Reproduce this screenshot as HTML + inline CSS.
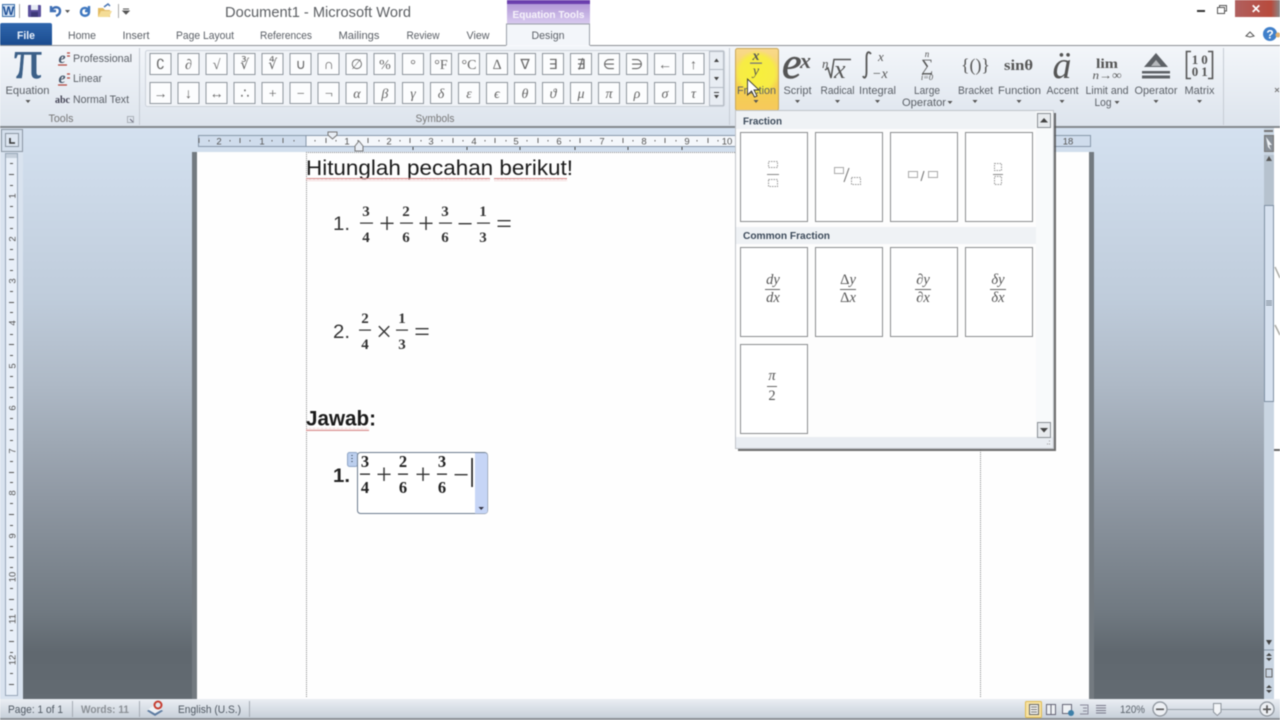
<!DOCTYPE html>
<html><head><meta charset="utf-8"><title>Document1 - Microsoft Word</title>
<style>
html,body{margin:0;padding:0;width:1280px;height:720px;overflow:hidden;background:#fff}
svg{display:block;filter:blur(.45px)}
text{font-family:"Liberation Sans",sans-serif}
.r{font-size:11px;fill:#5a5f66}
.c{text-anchor:middle}
.s{font-family:"Liberation Serif",serif}
.sym{font-family:"Liberation Serif","DejaVu Sans",serif;font-size:14px;fill:#666;text-anchor:middle}
.ic{font-family:"Liberation Serif",serif;fill:#555}
.m{font-family:"Liberation Serif",serif;font-weight:bold;font-size:15px;fill:#333;text-anchor:middle}
.mb{font-family:"Liberation Serif",serif;font-weight:bold;font-size:16.5px;fill:#222;text-anchor:middle}
text.op{font-family:"Liberation Serif",serif;font-size:28px;fill:#333;text-anchor:middle}
.rn{font-size:9.5px;fill:#555;text-anchor:middle}
.g{font-family:"Liberation Serif",serif;font-style:italic;font-size:14.5px;fill:#555;text-anchor:middle}
.u{font-style:normal}
.ph{fill:none;stroke:#999;stroke-width:1;stroke-dasharray:1.5 1}
</style></head><body>
<svg width="1280" height="720" viewBox="0 0 1280 720" xmlns="http://www.w3.org/2000/svg">
<defs>
<linearGradient id="bg" x1="0" y1="128" x2="0" y2="698" gradientUnits="userSpaceOnUse">
<stop offset="0" stop-color="#d4e1f0"/><stop offset=".3" stop-color="#bfccdb"/><stop offset=".45" stop-color="#aeb9c6"/><stop offset=".65" stop-color="#8f98a3"/><stop offset=".85" stop-color="#707981"/><stop offset=".92" stop-color="#60686f"/><stop offset="1" stop-color="#636b72"/></linearGradient>
<linearGradient id="rib" x1="0" y1="0" x2="0" y2="1"><stop offset="0" stop-color="#f3f6fa"/><stop offset="1" stop-color="#dde4ed"/></linearGradient>
<linearGradient id="file" x1="0" y1="0" x2="0" y2="1"><stop offset="0" stop-color="#2f66ad"/><stop offset="1" stop-color="#1a4b8e"/></linearGradient>
<linearGradient id="eq" x1="0" y1="0" x2="0" y2="1"><stop offset="0" stop-color="#b39ad8"/><stop offset="1" stop-color="#d9cbef"/></linearGradient>
<linearGradient id="yel" x1="0" y1="0" x2="0" y2="1"><stop offset="0" stop-color="#f9d98c"/><stop offset=".6" stop-color="#f5d04f"/><stop offset="1" stop-color="#f6c95c"/></linearGradient>
<radialGradient id="spot"><stop offset="0" stop-color="#f7f03c"/><stop offset=".75" stop-color="#f7ec45"/><stop offset="1" stop-color="#f7ec45" stop-opacity="0"/></radialGradient>
<linearGradient id="st" x1="0" y1="0" x2="0" y2="1"><stop offset="0" stop-color="#eaeef3"/><stop offset="1" stop-color="#c8d0da"/></linearGradient>
<linearGradient id="cl" x1="0" y1="0" x2="1" y2="0"><stop offset="0" stop-color="#b0605f"/><stop offset=".8" stop-color="#b84a3c"/><stop offset="1" stop-color="#888"/></linearGradient>
<pattern id="wave" width="4" height="3" patternUnits="userSpaceOnUse"><path d="M0 2L1 1L2 2L3 1L4 2" stroke="#d88a8a" fill="none" stroke-width="1"/></pattern>
<g id="row" fill="#fcfdfe" stroke="#8f969e" stroke-width="1">
<rect x="150" y="0" width="21" height="21"/><rect x="178" y="0" width="21" height="21"/><rect x="206" y="0" width="21" height="21"/><rect x="234" y="0" width="21" height="21"/><rect x="262" y="0" width="21" height="21"/><rect x="290" y="0" width="21" height="21"/><rect x="318" y="0" width="21" height="21"/><rect x="346" y="0" width="21" height="21"/><rect x="374" y="0" width="21" height="21"/><rect x="402.500" y="0" width="21" height="21"/><rect x="430.500" y="0" width="21" height="21"/><rect x="458.500" y="0" width="21" height="21"/><rect x="486.500" y="0" width="21" height="21"/><rect x="514.500" y="0" width="21" height="21"/><rect x="542.500" y="0" width="21" height="21"/><rect x="570.500" y="0" width="21" height="21"/><rect x="598.500" y="0" width="21" height="21"/><rect x="626.500" y="0" width="21" height="21"/><rect x="654.500" y="0" width="21" height="21"/><rect x="683" y="0" width="21" height="21"/>
</g>
<path id="ar" d="M-2.500 0H2.500L0 3Z" fill="#555"/>
</defs>

<!-- workspace -->
<rect x="0" y="127" width="1280" height="572" fill="url(#bg)"/>
<rect x="0" y="127" width="23" height="572" fill="#d9e3ef"/>
<rect x="1264" y="127" width="10" height="572" fill="#c9d5e2"/>
<rect x="1274" y="127" width="6" height="572" fill="#fff"/>
<path d="M1275 267L1280 278M1275 325L1280 335" stroke="#a9a9a4" stroke-width="1.500"/>
<rect x="1274" y="449" width="6" height="2" fill="#666"/>

<!-- page -->
<rect x="192" y="152" width="5" height="547" fill="#737a80"/>
<rect x="1089" y="152" width="5" height="547" fill="#737a80"/>
<rect x="197" y="152" width="892" height="547" fill="#fefefe"/>
<path d="M306.500 152V698M980.500 152V698M306 152.500H980" stroke="#868889" stroke-width="1" stroke-dasharray="1 1" fill="none"/>

<!-- tab selector + vertical ruler -->
<rect x="1.500" y="129.500" width="21" height="22" fill="#d4dfec" stroke="#8b96a3"/>
<rect x="5.500" y="133.500" width="13" height="13" fill="#dde6f1" stroke="#8b96a3"/>
<path d="M10 138V143H15" stroke="#333" stroke-width="1.600" fill="none"/>
<rect x="5.500" y="153.500" width="12" height="542" fill="#e8eff8" stroke="#98a7b8"/>
<rect x="6" y="154" width="11" height="4" fill="#c5cfdb"/>
<g fill="#555">
<rect x="10" y="163" width="3" height="1"/><rect x="9" y="174" width="5" height="1"/><rect x="10" y="185" width="3" height="1"/><rect x="10" y="206" width="3" height="1"/><rect x="9" y="217" width="5" height="1"/><rect x="10" y="228" width="3" height="1"/><rect x="10" y="249" width="3" height="1"/><rect x="9" y="259" width="5" height="1"/><rect x="10" y="270" width="3" height="1"/><rect x="10" y="291" width="3" height="1"/><rect x="9" y="302" width="5" height="1"/><rect x="10" y="312" width="3" height="1"/><rect x="10" y="334" width="3" height="1"/><rect x="9" y="344" width="5" height="1"/><rect x="10" y="355" width="3" height="1"/><rect x="10" y="376" width="3" height="1"/><rect x="9" y="387" width="5" height="1"/><rect x="10" y="397" width="3" height="1"/><rect x="10" y="418" width="3" height="1"/><rect x="9" y="429" width="5" height="1"/><rect x="10" y="440" width="3" height="1"/><rect x="10" y="461" width="3" height="1"/><rect x="9" y="472" width="5" height="1"/><rect x="10" y="482" width="3" height="1"/><rect x="10" y="503" width="3" height="1"/><rect x="9" y="514" width="5" height="1"/><rect x="10" y="525" width="3" height="1"/><rect x="10" y="546" width="3" height="1"/><rect x="9" y="557" width="5" height="1"/><rect x="10" y="567" width="3" height="1"/><rect x="10" y="588" width="3" height="1"/><rect x="9" y="599" width="5" height="1"/><rect x="10" y="609" width="3" height="1"/><rect x="10" y="630" width="3" height="1"/><rect x="9" y="641" width="5" height="1"/><rect x="10" y="652" width="3" height="1"/><rect x="10" y="673" width="3" height="1"/><rect x="9" y="684" width="5" height="1"/>
</g>
<g>
<text class="rn" transform="translate(15.500,196) rotate(-90)">1</text><text class="rn" transform="translate(15.500,239) rotate(-90)">2</text><text class="rn" transform="translate(15.500,281) rotate(-90)">3</text><text class="rn" transform="translate(15.500,323) rotate(-90)">4</text><text class="rn" transform="translate(15.500,366) rotate(-90)">5</text><text class="rn" transform="translate(15.500,408) rotate(-90)">6</text><text class="rn" transform="translate(15.500,451) rotate(-90)">7</text><text class="rn" transform="translate(15.500,493) rotate(-90)">8</text><text class="rn" transform="translate(15.500,536) rotate(-90)">9</text><text class="rn" transform="translate(15.500,577) rotate(-90)">10</text><text class="rn" transform="translate(15.500,619) rotate(-90)">11</text><text class="rn" transform="translate(15.500,660) rotate(-90)">12</text>
</g>

<!-- horizontal ruler -->
<rect x="198.500" y="135.500" width="892" height="11" fill="#cfdcec" stroke="#8898ab"/>
<rect x="306" y="136" width="674" height="10" fill="#f4f7fb"/>
<path d="M306 135V147" stroke="#8898ab"/>
<g><text class="rn" x="219" y="144.500">2</text><text class="rn" x="262" y="144.500">1</text><text class="rn" x="347" y="144.500">1</text><text class="rn" x="389" y="144.500">2</text><text class="rn" x="431" y="144.500">3</text><text class="rn" x="474" y="144.500">4</text><text class="rn" x="516" y="144.500">5</text><text class="rn" x="559" y="144.500">6</text><text class="rn" x="602" y="144.500">7</text><text class="rn" x="644" y="144.500">8</text><text class="rn" x="687" y="144.500">9</text><text class="rn" x="727" y="144.500">10</text><text class="rn" x="1068" y="144.500">18</text></g>
<path d="M199 138v5M209 140v1.500M230 140v1.500M240 138v5M250 140v1.500M272 140v1.500M283 138v5M294 140v1.500M315 140v1.500M326 138v5M336 140v1.500M358 140v1.500M368 138v5M379 140v1.500M400 140v1.500M410 138v5M421 140v1.500M442 140v1.500M453 138v5M463 140v1.500M485 140v1.500M495 138v5M506 140v1.500M527 140v1.500M538 138v5M548 140v1.500M570 140v1.500M580 138v5M591 140v1.500M612 140v1.500M623 138v5M633 140v1.500M655 140v1.500M665 138v5M676 140v1.500M697 140v1.500M708 138v5M718 140v1.500" stroke="#666" fill="none"/>
<path d="M413 147v3M467 147v3M520 147v3M575 147v3M628 147v3M682 147v3" stroke="#444" fill="none"/>
<path d="M328 132H337V135L332.500 139L328 135Z" fill="#e9eef5" stroke="#777"/>
<path d="M355 146L359 141L363 146V151H355Z" fill="#e9eef5" stroke="#777"/>

<!-- right scrollbar -->
<rect x="1264" y="130" width="9" height="2" fill="#777"/>
<rect x="1264.500" y="135.500" width="9" height="16" fill="#888f97" stroke="#777"/>
<path d="M1266 137L1272 145L1269 145L1271 150L1268 147Z" fill="#eef2f6"/>
<rect x="1264" y="155" width="10" height="50" fill="#aeb9c6" opacity=".7"/>
<path d="M1266 161H1272L1269 156Z" fill="#555"/>
<rect x="1264.500" y="205.500" width="9" height="196" fill="#d7e2f0" stroke="#7f90a3"/>
<path d="M1266 301H1272M1266 303H1272M1266 305H1272" stroke="#7a8795" fill="none"/>
<path d="M1266 640H1272L1269 645Z" fill="#444"/>
<path d="M1264 650H1274" stroke="#8795a4"/>
<path d="M1266 656H1272L1269 653ZM1266 658H1272L1269 661Z" fill="#444"/>
<rect x="1266" y="669" width="6" height="8" fill="none" stroke="#666"/>
<path d="M1266 688H1272L1269 685ZM1266 690H1272L1269 693Z" fill="#444"/>

<!-- document -->
<text x="306" y="175" font-size="21" textLength="267" lengthAdjust="spacingAndGlyphs" fill="#1a1a1a">Hitunglah pecahan berikut!</text>
<rect x="306" y="178" width="184" height="3" fill="url(#wave)"/>
<rect x="494" y="178" width="73" height="3" fill="url(#wave)"/>

<text x="333" y="230" font-size="19" textLength="17" lengthAdjust="spacingAndGlyphs" fill="#333">1.</text>
<text class="m" x="366" y="216">3</text><rect x="360" y="222.500" width="13" height="1.200" fill="#333"/><text class="m" x="366" y="242">4</text>
<text class="op" x="387" y="233">+</text>
<text class="m" x="406" y="216">2</text><rect x="400" y="222.500" width="13" height="1.200" fill="#333"/><text class="m" x="406" y="242">6</text>
<text class="op" x="426" y="233">+</text>
<text class="m" x="445" y="216">3</text><rect x="439" y="222.500" width="13" height="1.200" fill="#333"/><text class="m" x="445" y="242">6</text>
<text class="op" x="465" y="233">−</text>
<text class="m" x="483" y="216">1</text><rect x="477" y="222.500" width="13" height="1.200" fill="#333"/><text class="m" x="483" y="242">3</text>
<text class="op" x="504" y="233">=</text>

<text x="333" y="338" font-size="19" textLength="17" lengthAdjust="spacingAndGlyphs" fill="#333">2.</text>
<text class="m" x="365" y="323">2</text><rect x="359" y="329.500" width="12" height="1.200" fill="#333"/><text class="m" x="365" y="349">4</text>
<text class="op" x="384" y="341">×</text>
<text class="m" x="402" y="323">1</text><rect x="396" y="329.500" width="12" height="1.200" fill="#333"/><text class="m" x="402" y="349">3</text>
<text class="op" x="422" y="341">=</text>

<text x="306" y="425.500" font-size="21" font-weight="bold" textLength="70" lengthAdjust="spacingAndGlyphs" fill="#1a1a1a">Jawab:</text>
<rect x="306" y="428" width="63" height="3" fill="url(#wave)"/>

<rect x="347.500" y="452.500" width="10" height="14" rx="2" fill="#bccfee" stroke="#8ea5c6"/>
<path d="M352 455v1M352 458v1M352 461v1" stroke="#345" stroke-width="1.200"/>
<rect x="357.500" y="452.500" width="130" height="61" rx="3" fill="#fff" stroke="#6c7c8e"/>
<path d="M475 453H485a2.500 2.500 0 0 1 2.500 2.500V511a2.500 2.500 0 0 1-2.500 2.500H475Z" fill="#c6d5f6"/>
<path d="M478.500 507H484L481.200 510Z" fill="#334"/>
<text x="333" y="482" font-size="19" font-weight="bold" textLength="17" lengthAdjust="spacingAndGlyphs" fill="#222">1.</text>
<text class="mb" x="365" y="467">3</text><rect x="360" y="473.500" width="10" height="1.300" fill="#222"/><text class="mb" x="365" y="493">4</text>
<text class="op" x="384" y="484">+</text>
<text class="mb" x="403" y="467">2</text><rect x="398" y="473.500" width="10" height="1.300" fill="#222"/><text class="mb" x="403" y="493">6</text>
<text class="op" x="423" y="484">+</text>
<text class="mb" x="442" y="467">3</text><rect x="437" y="473.500" width="10" height="1.300" fill="#222"/><text class="mb" x="442" y="493">6</text>
<text class="op" x="461" y="484">−</text>
<rect x="471.300" y="458" width="1.500" height="29" fill="#111"/>

<!-- title bar + tabs -->
<rect x="0" y="0" width="1280" height="45" fill="#fff"/>
<rect x="2.500" y="4.500" width="12" height="12" fill="#d5e3f3" stroke="#3a6ea8"/>
<text x="8.500" y="15" font-size="12" font-weight="bold" fill="#1e4f96" class="c">W</text>
<path d="M19.500 4V18M118.500 4V18" stroke="#aaa"/>
<rect x="28" y="5" width="13" height="12" rx="1" fill="#5a4f9b"/><rect x="31" y="5" width="7" height="5" fill="#e8ecf5"/><rect x="31" y="12" width="7" height="5" fill="#3d3878"/>
<path d="M51 6V11H56M51 11C53 6 60 6 60 11C60 14 58 15 56 16" stroke="#3f6fb5" stroke-width="2.400" fill="none"/>
<path d="M65 10H70L67.500 13Z" fill="#555"/>
<path d="M89 6V11H85M88 10C87 7 81 7 81 12C81 17 89 17 89 12" stroke="#3f78c0" stroke-width="2.400" fill="none"/>
<path d="M98 8H103L105 10H110V17H98Z" fill="#e3bb63"/><path d="M98 17L101 11H112L109 17Z" fill="#f4dc96"/><path d="M104 7L108 4L110 6" stroke="#4a76b5" stroke-width="1.500" fill="none"/>
<path d="M123 9H129M123 11H129L126 14H126Z" stroke="#555" fill="#555"/>
<text x="225" y="17" font-size="15" textLength="186" lengthAdjust="spacingAndGlyphs" fill="#5c5f63">Document1  -  Microsoft Word</text>
<rect x="1197" y="10" width="8" height="2" fill="#333"/>
<rect x="1217.500" y="7.500" width="7" height="6" fill="#fff" stroke="#555"/><path d="M1219.500 7V5.500H1226.500V11H1225" stroke="#555" fill="none"/>
<rect x="1235" y="0" width="45" height="17" fill="url(#cl)"/>
<text x="1256" y="13" font-size="12" font-weight="bold" fill="#fff" class="c">✕</text>

<rect x="0" y="23" width="52" height="23" rx="2" fill="url(#file)"/>
<text x="26" y="39" font-size="11" font-weight="bold" fill="#e9f0fa" class="c" textLength="18" lengthAdjust="spacingAndGlyphs">File</text>
<text class="r c" x="82" y="39" textLength="28" lengthAdjust="spacingAndGlyphs">Home</text>
<text class="r c" x="136" y="39" textLength="27" lengthAdjust="spacingAndGlyphs">Insert</text>
<text class="r c" x="205" y="39" textLength="58" lengthAdjust="spacingAndGlyphs">Page Layout</text>
<text class="r c" x="286" y="39" textLength="52" lengthAdjust="spacingAndGlyphs">References</text>
<text class="r c" x="359" y="39" textLength="41" lengthAdjust="spacingAndGlyphs">Mailings</text>
<text class="r c" x="423" y="39" textLength="33" lengthAdjust="spacingAndGlyphs">Review</text>
<text class="r c" x="478" y="39" textLength="23" lengthAdjust="spacingAndGlyphs">View</text>
<rect x="507" y="0" width="83" height="4" fill="#6b3fae"/>
<rect x="507" y="4" width="83" height="20" fill="url(#eq)"/>
<text x="548.500" y="18" font-size="10.500" font-weight="bold" fill="#f6f2fb" class="c" textLength="72" lengthAdjust="spacingAndGlyphs">Equation Tools</text>
<path d="M506.500 45.500V24H589.500V45.500" fill="#f3f6fa" stroke="#9aa0a8"/>
<text class="r c" x="548" y="39" textLength="33" lengthAdjust="spacingAndGlyphs">Design</text>
<path d="M0 45.500H506M590 45.500H1280" stroke="#8c9095"/>
<path d="M1246 36L1250 32L1254 36L1250 37Z" fill="none" stroke="#555"/>
<circle cx="1270" cy="34" r="7" fill="#3f7fca"/><text x="1270" y="38.500" font-size="12" font-weight="bold" fill="#fff" class="c">?</text>
<circle cx="1278" cy="35" r="2.500" fill="#e0b070"/>

<!-- ribbon -->
<rect x="0" y="46" width="1280" height="80" fill="url(#rib)"/>
<rect x="0" y="126" width="1280" height="2" fill="#84898e"/>
<path d="M139.500 48V125M729.500 48V125M1223.500 48V125" stroke="#c6ccd4"/>

<text x="28" y="78" font-size="56" class="c s" fill="#3c6088" stroke="#3c6088" stroke-width=".5">π</text>
<text class="r c" x="27.500" y="94" textLength="44" lengthAdjust="spacingAndGlyphs">Equation</text>
<use href="#ar" x="28" y="100"/>
<text x="62" y="63" font-size="16" font-style="italic" font-weight="bold" class="s c" fill="#45576b">e</text><path d="M67 53h3M67 56h3M58 65h9" stroke="#b5473e" stroke-width="1.300" fill="none"/>
<text x="62" y="83" font-size="16" font-style="italic" font-weight="bold" class="s c" fill="#45576b">e</text><path d="M67 74h3M67 78h3M58 85h9" stroke="#b5473e" stroke-width="1.300" fill="none"/>
<text x="55" y="103" font-size="10" font-weight="bold" class="s" fill="#445" textLength="15" lengthAdjust="spacingAndGlyphs">abc</text>
<text class="r" x="73" y="62" textLength="59" lengthAdjust="spacingAndGlyphs">Professional</text>
<text class="r" x="73" y="82" textLength="29" lengthAdjust="spacingAndGlyphs">Linear</text>
<text class="r" x="73" y="103" textLength="56" lengthAdjust="spacingAndGlyphs">Normal Text</text>
<text class="r c" x="61" y="122" textLength="25" lengthAdjust="spacingAndGlyphs" style="fill:#777">Tools</text>
<path d="M127.500 116.500H133.500V122.500H127.500Z" fill="none" stroke="#aab0b8"/><path d="M130 119L133 122" stroke="#667"/>

<!-- symbols -->
<rect x="145.500" y="50.500" width="579" height="56" rx="2" fill="#f0f3f7" stroke="#ccd2da"/>
<use href="#row" y="53.500"/><use href="#row" y="82.500"/>
<text class="sym" x="160.500" y="69">∁</text><text class="sym" x="188.500" y="69">∂</text><text class="sym" x="216.600" y="69">√</text><text class="sym" x="244.700" y="69">∛</text><text class="sym" x="272.700" y="69">∜</text><text class="sym" x="300.800" y="69">∪</text><text class="sym" x="328.800" y="69">∩</text><text class="sym" x="356.900" y="69">∅</text><text class="sym" x="384.900" y="69">%</text><text class="sym" x="413" y="69">°</text><text class="sym" x="441" y="69">°F</text><text class="sym" x="469" y="69">°C</text><text class="sym" x="497" y="69">∆</text><text class="sym" x="525" y="69">∇</text><text class="sym" x="553" y="69">∃</text><text class="sym" x="581" y="69">∄</text><text class="sym" x="609" y="69">∈</text><text class="sym" x="637" y="69">∋</text><text class="sym" x="665" y="69">←</text><text class="sym" x="693.500" y="69">↑</text>
<text class="sym" x="160.500" y="98">→</text><text class="sym" x="188.500" y="98">↓</text><text class="sym" x="216.600" y="98">↔</text><text class="sym" x="244.700" y="98">∴</text><text class="sym" x="272.700" y="98">+</text><text class="sym" x="300.800" y="98">−</text><text class="sym" x="328.800" y="98">¬</text><text class="sym" x="356.900" y="98" font-style="italic">α</text><text class="sym" x="384.900" y="98" font-style="italic">β</text><text class="sym" x="413" y="98" font-style="italic">γ</text><text class="sym" x="441" y="98" font-style="italic">δ</text><text class="sym" x="469" y="98" font-style="italic">ε</text><text class="sym" x="497" y="98" font-style="italic">ϵ</text><text class="sym" x="525" y="98" font-style="italic">θ</text><text class="sym" x="553" y="98" font-style="italic">ϑ</text><text class="sym" x="581" y="98" font-style="italic">μ</text><text class="sym" x="609" y="98" font-style="italic">π</text><text class="sym" x="637" y="98" font-style="italic">ρ</text><text class="sym" x="665" y="98" font-style="italic">σ</text><text class="sym" x="693.500" y="98" font-style="italic">τ</text>
<rect x="709.500" y="51.500" width="14" height="18" fill="#e8edf3" stroke="#b3bac3"/><rect x="709.500" y="69.500" width="14" height="18" fill="#e8edf3" stroke="#b3bac3"/><rect x="709.500" y="87.500" width="14" height="18" fill="#e8edf3" stroke="#b3bac3"/>
<path d="M714 62H719L716.500 58.500ZM714 77H719L716.500 80.500ZM714 95H719L716.500 98.500Z" fill="#444"/><path d="M714 92.500H719" stroke="#444"/>
<text class="r c" x="435" y="122" textLength="39" lengthAdjust="spacingAndGlyphs" style="fill:#777">Symbols</text>

<!-- fraction button -->
<rect x="735.500" y="48.500" width="43" height="62" rx="2" fill="url(#yel)" stroke="#c9a75a"/>
<clipPath id="fb"><rect x="736" y="49" width="42" height="61"/></clipPath>
<circle cx="757" cy="73" r="23" fill="url(#spot)" clip-path="url(#fb)"/>
<text x="756" y="60" font-size="14" font-style="italic" font-weight="bold" class="s c" fill="#555">x</text>
<rect x="750" y="62.500" width="12" height="1.300" fill="#777"/>
<text x="756" y="75" font-size="14" font-style="italic" class="s c" fill="#555">y</text>
<text class="r c" x="756.500" y="94" textLength="39" lengthAdjust="spacingAndGlyphs">Fraction</text>
<use href="#ar" x="756" y="100"/>
<path d="M747.500 79V95L751.500 91L754.500 97L757 96L754 90H759Z" fill="#fff" stroke="#333" stroke-width=".9"/>

<!-- other equation buttons -->
<text x="782" y="78" font-size="44" font-style="italic" class="ic" stroke="#555" stroke-width=".6">e</text>
<text x="800" y="68" font-size="22" font-style="italic" font-weight="bold" class="ic">x</text>
<text class="r c" x="797.500" y="94" textLength="28" lengthAdjust="spacingAndGlyphs">Script</text><use href="#ar" x="797.500" y="100"/>

<text x="822" y="68" font-size="13" font-style="italic" class="ic">n</text>
<path d="M825 70L828 68L831 78L834 59.500H851" stroke="#555" stroke-width="1.500" fill="none"/>
<text x="834" y="78" font-size="26" font-style="italic" class="ic">x</text>
<text class="r c" x="837.500" y="94" textLength="34" lengthAdjust="spacingAndGlyphs">Radical</text><use href="#ar" x="837.500" y="100"/>

<path d="M871 54C868 50 866.500 53 866.500 58V72C866.500 78 864 79 863 76" stroke="#555" stroke-width="1.800" fill="none"/>
<text x="878" y="61" font-size="13" font-style="italic" class="ic">x</text>
<text x="872" y="78" font-size="14" font-style="italic" class="ic">−x</text>
<text class="r c" x="877.500" y="94" textLength="37" lengthAdjust="spacingAndGlyphs">Integral</text><use href="#ar" x="877.500" y="100"/>

<text x="927" y="57" font-size="9" font-style="italic" class="ic c">n</text>
<text x="927" y="71" font-size="17" class="ic c">∑</text>
<text x="927" y="80" font-size="8.500" font-style="italic" class="ic c">i=0</text>
<text class="r c" x="927" y="94" textLength="26" lengthAdjust="spacingAndGlyphs">Large</text>
<text class="r c" x="924" y="106" textLength="44" lengthAdjust="spacingAndGlyphs">Operator</text><use href="#ar" x="950" y="101"/>

<text x="975.500" y="71" font-size="18" class="ic c" textLength="29" lengthAdjust="spacingAndGlyphs">{()}</text>
<text class="r c" x="975.500" y="94" textLength="35" lengthAdjust="spacingAndGlyphs">Bracket</text><use href="#ar" x="975" y="100"/>

<text x="1018.500" y="70" font-size="15" font-weight="bold" class="ic c" textLength="29" lengthAdjust="spacingAndGlyphs">sinθ</text>
<text class="r c" x="1019.500" y="94" textLength="43" lengthAdjust="spacingAndGlyphs">Function</text><use href="#ar" x="1019" y="100"/>

<text x="1062" y="78" font-size="38" font-style="italic" class="ic c">ä</text>
<text class="r c" x="1062.500" y="94" textLength="32" lengthAdjust="spacingAndGlyphs">Accent</text><use href="#ar" x="1062" y="100"/>

<text x="1107" y="68" font-size="14" font-weight="bold" class="ic c" textLength="22" lengthAdjust="spacingAndGlyphs">lim</text>
<text x="1107" y="79" font-size="12" font-style="italic" class="ic c" textLength="29" lengthAdjust="spacingAndGlyphs">n→∞</text>
<text class="r c" x="1107" y="94" textLength="43" lengthAdjust="spacingAndGlyphs">Limit and</text>
<text class="r c" x="1103" y="106" textLength="17" lengthAdjust="spacingAndGlyphs">Log</text><use href="#ar" x="1117" y="101"/>

<path d="M1156 53L1168 67H1144Z" fill="#5d6166"/><path d="M1156 60L1161 66H1151Z" fill="#b5b8bc"/>
<rect x="1142" y="71" width="28" height="2.500" fill="#5d6166"/><rect x="1142" y="75.500" width="28" height="3" fill="#5d6166"/>
<text class="r c" x="1156" y="94" textLength="43" lengthAdjust="spacingAndGlyphs">Operator</text><use href="#ar" x="1156" y="100"/>

<path d="M1191 51.500H1186.500V78.500H1191M1208 51.500H1212.500V78.500H1208" stroke="#555" stroke-width="1.600" fill="none"/>
<text x="1195" y="64" font-size="13" font-weight="bold" class="ic c">1</text><text x="1204.500" y="64" font-size="13" font-weight="bold" class="ic c">0</text>
<text x="1195" y="76" font-size="13" font-weight="bold" class="ic c">0</text><text x="1204.500" y="76" font-size="13" font-weight="bold" class="ic c">1</text>
<text class="r c" x="1199.500" y="94" textLength="30" lengthAdjust="spacingAndGlyphs">Matrix</text><use href="#ar" x="1199.500" y="100"/>
<path d="M1275 88L1279 92M1279 88L1275 92" stroke="#777"/>

<!-- popup -->
<rect x="738" y="113" width="318" height="338" fill="#555" opacity=".85"/>
<rect x="735.500" y="110.500" width="318" height="338" fill="#fdfdfd" stroke="#c0c4c9"/>
<rect x="736" y="111" width="300" height="18" fill="#eff2f5"/>
<rect x="736" y="227" width="300" height="17" fill="#eff2f5"/>
<rect x="1036" y="111" width="17" height="326" fill="#f8fafb"/>
<rect x="736" y="437" width="317" height="11" fill="#e9edf2"/>
<text x="743" y="124.500" font-size="10" font-weight="bold" fill="#3c4a5a" textLength="39" lengthAdjust="spacingAndGlyphs">Fraction</text>
<text x="743" y="239" font-size="10" font-weight="bold" fill="#3c4a5a" textLength="87" lengthAdjust="spacingAndGlyphs">Common Fraction</text>
<rect x="1037.500" y="113.500" width="13" height="14" fill="#e8ebee" stroke="#8a8f95"/><path d="M1040 122.500H1048L1044 118Z" fill="#444"/>
<rect x="1037.500" y="422.500" width="13" height="15" fill="#e8ebee" stroke="#8a8f95"/><path d="M1040 428H1048L1044 432.500Z" fill="#444"/>
<path d="M1049 441h1M1047 444h1M1049 444h1" stroke="#999"/>
<g fill="#fff" stroke="#8b8d8f">
<rect x="740.500" y="132.500" width="67" height="89"/><rect x="815.500" y="132.500" width="67" height="89"/><rect x="890.500" y="132.500" width="67" height="89"/><rect x="965.500" y="132.500" width="67" height="89"/>
<rect x="740.500" y="247.500" width="67" height="89"/><rect x="815.500" y="247.500" width="67" height="89"/><rect x="890.500" y="247.500" width="67" height="89"/><rect x="965.500" y="247.500" width="67" height="89"/>
<rect x="740.500" y="344.500" width="67" height="89"/>
</g>
<rect class="ph" x="768.500" y="161.500" width="9" height="6"/><path d="M767 174.500H779" stroke="#888"/><rect class="ph" x="768.500" y="179.500" width="9" height="7"/>
<rect x="834.500" y="167.500" width="9" height="6" fill="none" stroke="#aaa"/><path d="M844 182L849 168" stroke="#777" stroke-width="1.100"/><rect class="ph" x="851.500" y="177.500" width="9" height="7"/>
<rect x="908.500" y="171.500" width="9" height="6" fill="none" stroke="#aaa"/><path d="M921 181L924 171" stroke="#777" stroke-width="1.100"/><rect x="928.500" y="171.500" width="9" height="6" fill="none" stroke="#aaa"/>
<rect class="ph" x="994.500" y="163.500" width="7" height="7"/><path d="M993 174.500H1003" stroke="#888"/><rect class="ph" x="994.500" y="176.500" width="7" height="8"/>

<text class="g" x="773" y="284">dy</text><path d="M765 289.500H780" stroke="#666"/><text class="g" x="773" y="302">dx</text>
<text class="g" x="848" y="284"><tspan class="u">Δ</tspan>y</text><path d="M840 289.500H856" stroke="#666"/><text class="g" x="848" y="302"><tspan class="u">Δ</tspan>x</text>
<text class="g" x="923" y="284">∂y</text><path d="M915 289.500H931" stroke="#666"/><text class="g" x="923" y="302">∂x</text>
<text class="g" x="998" y="284">δy</text><path d="M990 289.500H1006" stroke="#666"/><text class="g" x="998" y="302">δx</text>
<text class="g" x="772" y="380">π</text><path d="M767 386.500H777" stroke="#666"/><text class="g u" x="772" y="400">2</text>

<!-- status bar -->
<rect x="0" y="699" width="1280" height="19" fill="url(#st)"/>
<rect x="0" y="718" width="1280" height="2" fill="#8c9096"/>
<text x="8" y="713" font-size="11" textLength="55" lengthAdjust="spacingAndGlyphs" fill="#4f5862">Page: 1 of 1</text>
<text x="81" y="713" font-size="11" textLength="48" lengthAdjust="spacingAndGlyphs" fill="#8a8f95" font-weight="bold">Words: 11</text>
<text x="178" y="713" font-size="11" textLength="63" lengthAdjust="spacingAndGlyphs" fill="#4f5862">English (U.S.)</text>
<path d="M72.500 701V717M139.500 701V717M249.500 701V717" stroke="#a5abb3"/>
<path d="M147 711L155 705L163 711L155 716Z" fill="#5d7ba0"/><path d="M148 709.500L155 704.500L162 709.500L155 713.500Z" fill="#eef2f6"/>
<circle cx="158" cy="705" r="3.500" fill="none" stroke="#c63d30" stroke-width="2"/>
<rect x="1025.500" y="701.500" width="16" height="16" rx="1" fill="#f6e2a4" stroke="#e0bb50"/>
<rect x="1029.500" y="704.500" width="9" height="10" fill="#f4f4f0" stroke="#666"/><path d="M1031 707H1037M1031 709.500H1037M1031 712H1037" stroke="#777"/>
<path d="M1046.500 704.500H1051V714.500H1046.500ZM1051 704.500H1055.500V714.500H1051Z" fill="#eef1f4" stroke="#667"/>
<rect x="1062.500" y="704.500" width="9" height="9" fill="#eef1f4" stroke="#667"/><circle cx="1071" cy="713" r="3" fill="#3d7fa8"/>
<path d="M1080 705H1088V714H1080M1083 708H1087M1083 711H1087" stroke="#889" fill="none"/>
<path d="M1096 705.500H1106M1096 708H1106M1096 710.500H1106M1096 713H1106" stroke="#778" fill="none"/>
<text x="1120" y="713" font-size="11" textLength="25" lengthAdjust="spacingAndGlyphs" fill="#5a626b">120%</text>
<path d="M1167 709.500H1260" stroke="#98a0a9"/>
<circle cx="1160" cy="709" r="7" fill="#edf0f4" stroke="#8d949c" stroke-width="1.300"/><path d="M1156 709.300H1164" stroke="#555" stroke-width="1.600"/>
<circle cx="1267" cy="709" r="7" fill="#edf0f4" stroke="#8d949c" stroke-width="1.300"/><path d="M1263 709.300H1271M1267 705.300V713.300" stroke="#555" stroke-width="1.600"/>
<path d="M1213.500 703.500H1221V712L1217.300 715.500L1213.500 712Z" fill="#f3f5f8" stroke="#8d949c"/>
</svg>
</body></html>
